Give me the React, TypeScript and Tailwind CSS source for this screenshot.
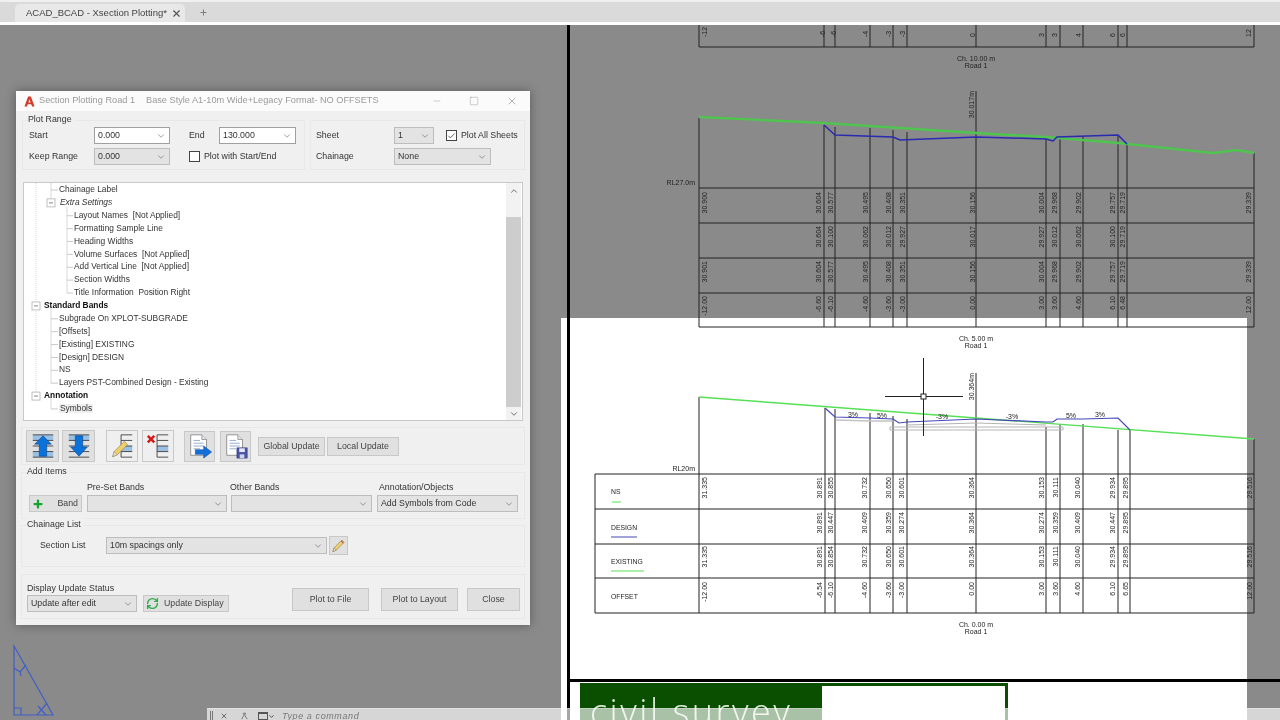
import { ChevronDown, ChevronUp, X, Plus, Minus, Square, RefreshCw, Check } from "lucide-react";
import clsx from "clsx";
import type { ReactNode } from "react";

/* ---------- dialog bits ---------- */

function Combo({ value, className, gray }: { value?: string; className?: string; gray?: boolean }) {
  return (
    <div
      className={clsx(
        "flex items-center justify-between border pl-[3px] pr-[3px] text-[#333]",
        gray ? "border-[#bdbdbd] bg-[#e3e3e3]" : "border-[#a0a0a0] bg-white",
        className
      )}
    >
      <span>{value}</span>
      <ChevronDown className="h-[10px] w-[10px] text-[#666]" strokeWidth={1.5} />
    </div>
  );
}

function CheckBox({ checked }: { checked?: boolean }) {
  return (
    <span className="flex h-[11px] w-[11px] items-center justify-center border border-[#444] bg-white">
      {checked && <Check className="h-[10px] w-[10px] text-[#333]" strokeWidth={2} />}
    </span>
  );
}

function Group({ label, className, children }: { label?: string; className?: string; children: ReactNode }) {
  return (
    <div className={clsx("relative border border-[#e8e8e8]", className)}>
      {label && (
        <span className="absolute left-[5px] top-[-8px] bg-[#f0f0f0] pr-[3px] leading-[12px] text-[#333]">
          {label}
        </span>
      )}
      {children}
    </div>
  );
}

function Btn({ className, children }: { className?: string; children: ReactNode }) {
  return (
    <div className={clsx("flex items-center border border-[#c8c8c8] bg-[#e0e0e0] text-[#444]", className)}>
      {children}
    </div>
  );
}

function PencilIcon({ className }: { className?: string }) {
  return (
    <svg viewBox="0 0 16 16" className={className}>
      <path d="M2 14.5 L3.2 10.6 L11.6 2.2 L14 4.6 L5.6 13 Z" fill="#f0cf6a" stroke="#8d8460" strokeWidth="0.7" />
      <path d="M2 14.5 L3.2 10.6 L5.6 13 Z" fill="#efe3c2" stroke="#8d8460" strokeWidth="0.6" />
      <path d="M10.8 3 L13.2 5.4" stroke="#b55" strokeWidth="1.2" />
    </svg>
  );
}

function TableRows({ fillRows, x = 2 }: { fillRows: number[]; x?: number }) {
  const ys = [2, 8, 14, 20];
  return (
    <g>
      {fillRows.map((r) => (
        <rect key={r} x={x} y={ys[r]} width={24 - x} height="6" fill="#9cc0e4" />
      ))}
      {[2, 8, 14, 20, 26].map((y) => (
        <line key={y} x1={x} x2="24" y1={y} y2={y} stroke="#444" strokeWidth="1" />
      ))}
    </g>
  );
}

function ToolIcon({ kind }: { kind: "up" | "down" | "edit" | "del" | "out" | "save" }) {
  return (
    <svg viewBox="0 0 26 28" className="h-[26px] w-[26px]">
      {kind === "up" && (
        <>
          <TableRows fillRows={[0, 3]} />
          <path d="M13 3 L22 12 L17 12 L17 25 L9 25 L9 12 L4 12 Z" fill="#0b72d9" stroke="#07408a" strokeWidth="0.6" />
        </>
      )}
      {kind === "down" && (
        <>
          <TableRows fillRows={[0]} />
          <path d="M13 25 L22 15 L17 15 L17 3 L9 3 L9 15 L4 15 Z" fill="#0b72d9" stroke="#07408a" strokeWidth="0.6" />
        </>
      )}
      {kind === "edit" && (
        <>
          <TableRows fillRows={[2]} x={12} />
          <line x1="12" x2="12" y1="2" y2="26" stroke="#444" />
          <path d="M3 25.5 L4.6 20 L15.5 9 L19 12.5 L8 23.5 Z" fill="#f0cf6a" stroke="#8d8460" strokeWidth="0.7" />
          <path d="M3 25.5 L4.6 20 L8 23.5 Z" fill="#efe3c2" stroke="#8d8460" strokeWidth="0.6" />
        </>
      )}
      {kind === "del" && (
        <>
          <TableRows fillRows={[2]} x={12} />
          <line x1="12" x2="12" y1="2" y2="26" stroke="#444" />
          <path d="M2 3 L9 10 M9 3 L2 10" stroke="#d81818" strokeWidth="2.6" />
        </>
      )}
      {(kind === "out" || kind === "save") && (
        <>
          <path d="M3 2 L15 2 L20 7 L20 24 L3 24 Z" fill="#fff" stroke="#777" strokeWidth="0.8" />
          <path d="M15 2 L15 7 L20 7" fill="#dfe6ee" stroke="#777" strokeWidth="0.7" />
          <path d="M6 8 H13 M6 11 H17 M6 14 H17 M6 17 H13" stroke="#8fabcc" strokeWidth="1" />
        </>
      )}
      {kind === "out" && (
        <path d="M8 18 L17 18 L17 14 L25.5 20.5 L17 27 L17 23 L8 23 Z" fill="#1470d8" stroke="#0b4a94" strokeWidth="0.6" />
      )}
      {kind === "save" && (
        <>
          <rect x="14" y="16" width="11" height="11" fill="#4a55a8" stroke="#2a2f6a" strokeWidth="0.6" />
          <rect x="16.5" y="16.5" width="6" height="4" fill="#e6e8f4" />
          <rect x="17" y="23" width="5" height="4" fill="#cfd3ea" />
        </>
      )}
    </svg>
  );
}

const treeRows: { text: string; pl: string; cls?: string }[] = [
  { text: "Chainage Label", pl: "pl-[35px]" },
  { text: "Extra Settings", pl: "pl-[36px]", cls: "italic" },
  { text: "Layout Names  [Not Applied]", pl: "pl-[50px]" },
  { text: "Formatting Sample Line", pl: "pl-[50px]" },
  { text: "Heading Widths", pl: "pl-[50px]" },
  { text: "Volume Surfaces  [Not Applied]", pl: "pl-[50px]" },
  { text: "Add Vertical Line  [Not Applied]", pl: "pl-[50px]" },
  { text: "Section Widths", pl: "pl-[50px]" },
  { text: "Title Information  Position Right", pl: "pl-[50px]" },
  { text: "Standard Bands", pl: "pl-[20px]", cls: "font-bold text-[#111]" },
  { text: "Subgrade On XPLOT-SUBGRADE", pl: "pl-[35px]" },
  { text: "[Offsets]", pl: "pl-[35px]" },
  { text: "[Existing] EXISTING", pl: "pl-[35px]" },
  { text: "[Design] DESIGN", pl: "pl-[35px]" },
  { text: "NS", pl: "pl-[35px]" },
  { text: "Layers PST-Combined Design - Existing", pl: "pl-[35px]" },
  { text: "Annotation", pl: "pl-[20px]", cls: "font-bold text-[#111]" },
  { text: "Symbols", pl: "pl-[35px]" },
];

function TreeLines() {
  const rowY = (i: number) => 7 + i * 12.88;
  const box = (x: number, y: number) => (
    <g key={`${x}-${y}`}>
      <rect x={x - 4} y={y - 4} width="8" height="8" fill="#fff" stroke="#b0b0b0" strokeWidth="0.8" />
      <line x1={x - 2} x2={x + 2} y1={y} y2={y} stroke="#666" strokeWidth="0.8" />
    </g>
  );
  const tick = (x1: number, x2: number, i: number) => (
    <line key={`t${i}`} x1={x1} x2={x2} y1={rowY(i)} y2={rowY(i)} stroke="#bcbcbc" strokeWidth="0.8" />
  );
  return (
    <svg className="absolute left-0 top-0 h-[239px] w-[80px]" viewBox="0 0 80 239">
      <g stroke="#cfcfcf" strokeWidth="0.8" fill="none">
        <line x1="12" x2="12" y1="0" y2={rowY(16)} strokeDasharray="1 1" />
        <line x1="27" x2="27" y1="0" y2={rowY(1)} />
        <line x1="43" x2="43" y1={rowY(1) + 4} y2={rowY(8)} />
        <line x1="27" x2="27" y1={rowY(9)} y2={rowY(15)} />
        <line x1="27" x2="27" y1={rowY(16)} y2={rowY(17)} />
      </g>
      {tick(27, 34, 0)}
      {[2, 3, 4, 5, 6, 7, 8].map((i) => tick(43, 49, i))}
      {[10, 11, 12, 13, 14, 15, 17].map((i) => tick(27, 34, i))}
      {box(27, rowY(1))}
      {box(12, rowY(9))}
      {box(12, rowY(16))}
    </svg>
  );
}

function Dialog() {
  return (
    <div className="absolute left-[16px] top-[91px] flex h-[534px] w-[514px] flex-col bg-[#f0f0f0] text-[8.8px] leading-none text-[#333] shadow-[0_0_10px_rgba(0,0,0,0.35)]">
      {/* title bar */}
      <div className="flex h-[20px] shrink-0 items-center bg-[#fbfbfb] pl-[8px] text-[9.2px] text-[#9a9a9a]">
        <svg viewBox="0 0 12 12" className="mr-[4px] h-[11px] w-[11px]">
          <path d="M0.5 11.5 L4.5 0.5 L7.5 0.5 L11.5 11.5 L8.8 11.5 L7.9 9 L4.1 9 L3.2 11.5 Z M4.8 7 L7.2 7 L6 3.5 Z" fill="#d23a2a" fillRule="evenodd" />
        </svg>
        <span>Section Plotting Road 1</span>
        <span className="ml-[11px]">Base Style A1-10m Wide+Legacy Format- NO OFFSETS</span>
        <div className="ml-auto flex items-center pr-[12px] text-[#8a8a8a]">
          <Minus className="mr-[27px] h-[10px] w-[10px]" strokeWidth={1} />
          <Square className="mr-[27px] h-[10px] w-[10px]" strokeWidth={1} />
          <X className="h-[12px] w-[12px] text-[#666]" strokeWidth={1} />
        </div>
      </div>

      {/* plot range */}
      <div className="ml-[6px] mt-[9px] flex gap-[5px]">
        <Group label="Plot Range" className="h-[50px] w-[283px] pl-[6px] pt-[6px]">
          <div className="flex h-[17px] items-center">
            <span className="w-[65px]">Start</span>
            <Combo value="0.000" className="h-[17px] w-[76px]" />
            <span className="ml-[19px] w-[30px]">End</span>
            <Combo value="130.000" className="h-[17px] w-[77px]" />
          </div>
          <div className="mt-[4px] flex h-[17px] items-center">
            <span className="w-[65px]">Keep Range</span>
            <Combo value="0.000" gray className="h-[17px] w-[76px]" />
            <span className="ml-[19px]">
              <CheckBox />
            </span>
            <span className="ml-[4px]">Plot with Start/End</span>
          </div>
        </Group>
        <Group className="h-[50px] w-[215px] pl-[5px] pt-[6px]">
          <div className="flex h-[17px] items-center">
            <span className="w-[78px]">Sheet</span>
            <Combo value="1" gray className="h-[17px] w-[40px]" />
            <span className="ml-[12px]">
              <CheckBox checked />
            </span>
            <span className="ml-[4px]">Plot All Sheets</span>
          </div>
          <div className="mt-[4px] flex h-[17px] items-center">
            <span className="w-[78px]">Chainage</span>
            <Combo value="None" gray className="h-[17px] w-[97px]" />
          </div>
        </Group>
      </div>

      {/* tree */}
      <div className="relative ml-[7px] mt-[12px] h-[239px] w-[500px] overflow-hidden border border-[#c8c8c8] bg-white text-[8.4px]">
        <TreeLines />
        <div className="relative flex flex-col">
          {treeRows.map((r) => (
            <div key={r.text} className={clsx("flex h-[12.88px] items-center whitespace-pre", r.pl, r.cls)}>
              <span className={clsx(r.text === "Symbols" && "bg-[#efefef] px-[1px]")}>{r.text}</span>
            </div>
          ))}
        </div>
        <div className="absolute right-[1px] top-0 flex h-full w-[15px] flex-col items-center bg-[#f2f2f2]">
          <ChevronUp className="mt-[3px] h-[10px] w-[10px] text-[#555]" strokeWidth={2} />
          <div className="mt-[21px] h-[190px] w-full bg-[#cdcdcd]" />
          <ChevronDown className="mt-[2px] h-[10px] w-[10px] text-[#555]" strokeWidth={2} />
        </div>
      </div>

      {/* toolbar */}
      <Group className="ml-[5px] mt-[6px] flex h-[38px] w-[504px] items-center pl-[4px]">
        <Btn className="h-[32px] w-[33px] justify-center"><ToolIcon kind="up" /></Btn>
        <Btn className="ml-[3px] h-[32px] w-[33px] justify-center"><ToolIcon kind="down" /></Btn>
        <Btn className="ml-[11px] h-[32px] w-[32px] justify-center !bg-[#efefef]"><ToolIcon kind="edit" /></Btn>
        <Btn className="ml-[4px] h-[32px] w-[32px] justify-center !bg-[#efefef]"><ToolIcon kind="del" /></Btn>
        <Btn className="ml-[10px] h-[31px] w-[31px] justify-center"><ToolIcon kind="out" /></Btn>
        <Btn className="ml-[5px] h-[31px] w-[31px] justify-center"><ToolIcon kind="save" /></Btn>
        <Btn className="ml-[7px] h-[19px] w-[67px] justify-center">Global Update</Btn>
        <Btn className="ml-[2px] h-[19px] w-[72px] justify-center">Local Update</Btn>
      </Group>

      {/* add items */}
      <Group label="Add Items" className="ml-[5px] mt-[7px] h-[47px] w-[504px]">
        <div className="flex h-[19px] items-end">
          <span className="ml-[65px] w-[143px]">Pre-Set Bands</span>
          <span className="w-[149px]">Other Bands</span>
          <span>Annotation/Objects</span>
        </div>
        <div className="mt-[3px] flex items-center pl-[7px]">
          <Btn className="h-[17px] w-[53px] justify-between pl-[2px] pr-[3px]">
            <Plus className="h-[12px] w-[12px] text-[#12a52c]" strokeWidth={4.5} />
            <span>Band</span>
          </Btn>
          <Combo gray className="ml-[5px] h-[17px] w-[140px]" />
          <Combo gray className="ml-[4px] h-[17px] w-[141px]" />
          <Combo value="Add Symbols from Code" gray className="ml-[5px] h-[17px] w-[141px]" />
        </div>
      </Group>

      {/* chainage list */}
      <Group label="Chainage List" className="ml-[5px] mt-[6px] flex h-[42px] w-[504px] items-start pl-[18px] pt-[11px]">
        <span className="flex h-[17px] w-[66px] items-center">Section List</span>
        <Combo value="10m spacings only" gray className="h-[17px] w-[221px]" />
        <Btn className="ml-[2px] mt-[-1px] h-[19px] w-[19px] justify-center">
          <PencilIcon className="h-[15px] w-[15px]" />
        </Btn>
      </Group>

      {/* display + plot */}
      <Group className="ml-[5px] mt-[7px] h-[45px] w-[504px] pl-[5px]">
        <div className="flex h-[20px] items-end pb-[2px]">Display Update Status</div>
        <div className="flex items-center">
          <Combo value="Update after edit" gray className="h-[17px] w-[110px]" />
          <Btn className="ml-[6px] h-[17px] w-[86px] pl-[2px]">
            <RefreshCw className="mr-[5px] h-[13px] w-[13px] text-[#2fa84a]" strokeWidth={2.5} />
            <span>Update Display</span>
          </Btn>
        </div>
        <div className="absolute left-[270px] top-[13px] flex">
          <Btn className="h-[23px] w-[77px] justify-center">Plot to File</Btn>
          <Btn className="ml-[12px] h-[23px] w-[77px] justify-center">Plot to Layout</Btn>
          <Btn className="ml-[9px] h-[23px] w-[53px] justify-center">Close</Btn>
        </div>
      </Group>
    </div>
  );
}

/* ---------- CAD drawing ---------- */

function VText({ x, y, text, end, size = 7, fill = "#222" }: { x: number; y: number; text: string; end?: boolean; size?: number; fill?: string }) {
  return (
    <text
      transform={`translate(${x + 2.5} ${y}) rotate(-90)`}
      textAnchor={end ? "end" : "start"}
      fontSize={size}
      fill={fill}
    >
      {text}
    </text>
  );
}

function Label({ x, y, text, anchor = "middle", size = 7, fill = "#222" }: { x: number; y: number; text: string; anchor?: "middle" | "start" | "end"; size?: number; fill?: string }) {
  return (
    <text x={x} y={y} textAnchor={anchor} fontSize={size} fill={fill}>
      {text}
    </text>
  );
}

function ValueRow({ xs, vals, top }: { xs: number[]; vals: string[]; top: number }) {
  return (
    <g>
      {vals.map((v, i) => (v ? <VText key={i} x={xs[i]} y={top} text={v} end /> : null))}
    </g>
  );
}

const upperLines = [699, 824, 835, 870, 893, 907, 976, 1046, 1060, 1083, 1118, 1127, 1254];
const upperText = [704, 818, 830, 865, 888, 902, 972, 1041, 1054, 1078, 1112, 1122, 1248];
const upperTops = [118, 125, 127, 128, 130, 132, 91, 139, 139, 136, 135, 144, 153];
const upperRows = [
  ["30.900", "30.604", "30.577", "30.495", "30.408", "30.351", "30.156", "30.004", "29.968", "29.902", "29.757", "29.719", "29.339"],
  ["", "30.604", "30.100", "30.062", "30.012", "29.927", "30.017", "29.927", "30.012", "30.062", "30.100", "29.719", ""],
  ["30.901", "30.604", "30.577", "30.495", "30.408", "30.351", "30.156", "30.004", "29.968", "29.902", "29.757", "29.719", "29.339"],
  ["-12.00", "-6.60", "-6.10", "-4.60", "-3.60", "-3.00", "0.00", "3.00", "3.60", "4.60", "6.10", "6.48", "12.00"],
];
// what is left of the section above, under the tab bar
const stripText = [704, 822, 833, 865, 888, 902, 972, 1041, 1054, 1078, 1112, 1122, 1248];
const stripVals = ["-12", "-6", "-6", "-4", "-3", "-3", "0", "3", "3", "4", "6", "6", "12"];

const lowerLines = [699, 825, 835, 870, 893, 907, 976, 1046, 1060, 1083, 1118, 1130, 1254];
const lowerText = [704, 819, 830, 864, 888, 901, 971, 1041, 1055, 1077, 1112, 1125, 1249];
const lowerTops = [397, 408, 409, 413, 416, 419, 373, 427, 425, 424, 430, 430, 439];
const lowerRows = [
  ["31.335", "30.891", "30.855", "30.732", "30.650", "30.601", "30.364", "30.153", "30.111", "30.040", "29.934", "29.895", "29.516"],
  ["", "30.891", "30.447", "30.409", "30.359", "30.274", "30.364", "30.274", "30.359", "30.409", "30.447", "29.895", ""],
  ["31.335", "30.891", "30.854", "30.732", "30.650", "30.601", "30.364", "30.153", "30.111", "30.040", "29.934", "29.895", "29.516"],
  ["-12.00", "-6.54", "-6.10", "-4.60", "-3.60", "-3.00", "0.00", "3.00", "3.60", "4.60", "6.10", "6.65", "12.00"],
];

function Drawing() {
  return (
    <svg viewBox="0 25 1280 695" className="block h-full w-full">
      {/* sheet */}
      <rect x="561" y="318" width="686" height="402" fill="#fff" />
      <rect x="567" y="25" width="3" height="695" fill="#000" />

      {/* strip of the section above */}
      <g stroke="#222" strokeWidth="1">
        {upperLines.map((x) => (
          <line key={x} x1={x} x2={x} y1="25" y2="47" />
        ))}
        <line x1="699" x2="1254" y1="47" y2="47" />
      </g>
      {stripVals.map((v, i) => (
        <VText key={i} x={stripText[i]} y={37} text={v} />
      ))}

      {/* Ch 10.00 */}
      <Label x={976} y={61} text="Ch. 10.00 m" />
      <Label x={976} y={68} text="Road 1" />
      <VText x={971} y={91} text="30.017m" end />
      <Label x={695} y={185} text="RL27.0m" anchor="end" />
      <g stroke="#222" strokeWidth="1">
        {upperLines.map((x, i) => (
          <line key={x} x1={x} x2={x} y1={upperTops[i]} y2="327" />
        ))}
        {[188, 223, 258, 293, 327].map((y) => (
          <line key={y} x1="699" x2="1254" y1={y} y2={y} />
        ))}
      </g>
      <polyline
        points="699,117 824,123 976,133 1046,137 1118,143 1213,153 1237,150 1254,153"
        fill="none"
        stroke="#4fc44f"
        strokeWidth="2.4"
      />
      <polyline
        points="824,125 835,135 893,137 900,140 976,137 1046,139 1053,141 1057,137 1118,135 1127,144"
        fill="none"
        stroke="#2a2ab0"
        strokeWidth="1.5"
      />
      <ValueRow xs={upperText} vals={upperRows[0]} top={192} />
      <ValueRow xs={upperText} vals={upperRows[1]} top={226} />
      <ValueRow xs={upperText} vals={upperRows[2]} top={261} />
      <ValueRow xs={upperText} vals={upperRows[3]} top={296} />

      {/* Ch 5.00 */}
      <Label x={976} y={341} text="Ch. 5.00 m" />
      <Label x={976} y={348} text="Road 1" />
      <VText x={971} y={373} text="30.364m" end />
      <Label x={695} y={471} text="RL20m" anchor="end" />
      <g stroke="#222" strokeWidth="1">
        {lowerLines.map((x, i) => (
          <line key={x} x1={x} x2={x} y1={lowerTops[i]} y2="613" />
        ))}
        {[474, 509, 544, 578, 613].map((y) => (
          <line key={y} x1="595" x2="1254" y1={y} y2={y} />
        ))}
        <line x1="595" x2="595" y1="474" y2="613" />
      </g>
      <path d="M890 427 H1063 V430 H890 Z M907 425 L976 423 L1046 425" fill="none" stroke="#b5b5b5" strokeWidth="1" />
      <path d="M836 420 L870 421 M870 421 L893 421" fill="none" stroke="#c4c4c4" strokeWidth="1.5" />
      <line x1="699" y1="397" x2="1254" y2="439" stroke="#55e055" strokeWidth="1.4" />
      <polyline
        points="825,408 835,417 870,418 893,419 899,423 907,422 976,419 1046,422 1053,422 1057,419 1083,419 1118,418 1130,430"
        fill="none"
        stroke="#4646b8"
        strokeWidth="1.2"
      />
      <Label x={853} y={417} text="3%" />
      <Label x={882} y={418} text="5%" />
      <Label x={942} y={419} text="-3%" />
      <Label x={1012} y={419} text="-3%" />
      <Label x={1071} y={418} text="5%" />
      <Label x={1100} y={417} text="3%" />

      <ValueRow xs={lowerText} vals={lowerRows[0]} top={477} />
      <ValueRow xs={lowerText} vals={lowerRows[1]} top={512} />
      <ValueRow xs={lowerText} vals={lowerRows[2]} top={546} />
      <ValueRow xs={lowerText} vals={lowerRows[3]} top={582} />

      <Label x={611} y={494} text="NS" anchor="start" size={6.8} />
      <line x1="612" x2="621" y1="502" y2="502" stroke="#55e055" strokeWidth="1" />
      <Label x={611} y={530} text="DESIGN" anchor="start" size={6.8} />
      <line x1="611" x2="637" y1="537" y2="537" stroke="#4646b8" strokeWidth="1" />
      <Label x={611} y={564} text="EXISTING" anchor="start" size={6.8} />
      <line x1="611" x2="644" y1="571" y2="571" stroke="#55e055" strokeWidth="1" />
      <Label x={611} y={599} text="OFFSET" anchor="start" size={6.8} />

      <Label x={976} y={627} text="Ch. 0.00 m" />
      <Label x={976} y={634} text="Road 1" />

      {/* crosshair */}
      <g stroke="#222" strokeWidth="1" fill="none">
        <line x1="923.5" x2="923.5" y1="358" y2="394" />
        <line x1="923.5" x2="923.5" y1="399" y2="436" />
        <line x1="885" x2="921" y1="396.5" y2="396.5" />
        <line x1="926" x2="963" y1="396.5" y2="396.5" />
        <rect x="921" y="394" width="5" height="5" />
      </g>

      {/* title block */}
      <rect x="568" y="679" width="712" height="3" fill="#000" />
      <rect x="580" y="683" width="428" height="37" fill="#0a4f00" />
      <rect x="822" y="686" width="183" height="34" fill="#fff" />
      <text x="590" y="725" fontSize="36" fill="#d8e8d4" fontFamily="'Open Sans', sans-serif" fontWeight="300" letterSpacing="2.5">
        civil survey
      </text>

      {/* ucs triangle */}
      <g fill="none" stroke="#3f5fc8" strokeWidth="1.2">
        <path d="M14 646 L14 715 L53 715 Z" />
        <path d="M14 668 L20 672 L26 665 M20 672 L21 676" />
        <path d="M14 708 L21 708 L21 715" />
        <path d="M37 715 L47 703 M38 706 L46 715" />
      </g>
    </svg>
  );
}

export default function App() {
  return (
    <div className="relative flex h-[720px] w-[1280px] flex-col overflow-hidden bg-[#8a8a8a] blur-[0.3px] [font-family:'Liberation_Sans',sans-serif]">
      {/* tabs */}
      <div className="flex h-[25px] shrink-0 flex-col bg-[#f0f0f0]">
        <div className="mt-[2px] flex h-[20px] items-end bg-[#dadada] pl-[15px]">
          <div className="flex h-[18px] w-[170px] items-center rounded-t-[5px] bg-[#e8e8e8] pl-[11px] text-[9.5px] text-[#444]">
            <span>ACAD_BCAD - Xsection Plotting*</span>
            <X className="ml-[4px] h-[11px] w-[11px] text-[#555]" strokeWidth={2.5} />
          </div>
          <div className="mb-[4px] ml-[12px] flex h-[12px] w-[12px] items-center justify-center text-[#777]">
            <Plus className="h-[9px] w-[9px]" strokeWidth={2.5} />
          </div>
        </div>
        <div className="flex-1 bg-white" />
      </div>

      {/* canvas */}
      <div className="min-h-0 flex-1">
        <Drawing />
      </div>

      <Dialog />

      {/* command line */}
      <div className="absolute bottom-0 left-[207px] right-0 flex h-[12px] items-start border-t border-white/30 bg-white/65 pt-[2px] text-[9px] leading-[10px] text-[#777]">
        <span className="ml-[3px] h-[10px] w-[3px] border-x border-[#777]" />
        <X className="ml-[7px] mt-[1px] h-[8px] w-[8px] text-[#555]" strokeWidth={2.5} />
        <svg viewBox="0 0 10 10" className="ml-[12px] mt-[1px] h-[8px] w-[8px]">
          <path d="M2 9 L5 4 L4 1.5 L7 1.5 L6 4 L9 9" fill="none" stroke="#666" strokeWidth="1" />
        </svg>
        <span className="ml-[10px] mt-[1px] h-[8px] w-[10px] border border-t-2 border-[#555]" />
        <ChevronDown className="mt-[2px] h-[7px] w-[7px] text-[#444]" strokeWidth={3} />
        <span className="ml-[7px] italic tracking-[0.6px]">Type a command</span>
      </div>
    </div>
  );
}
